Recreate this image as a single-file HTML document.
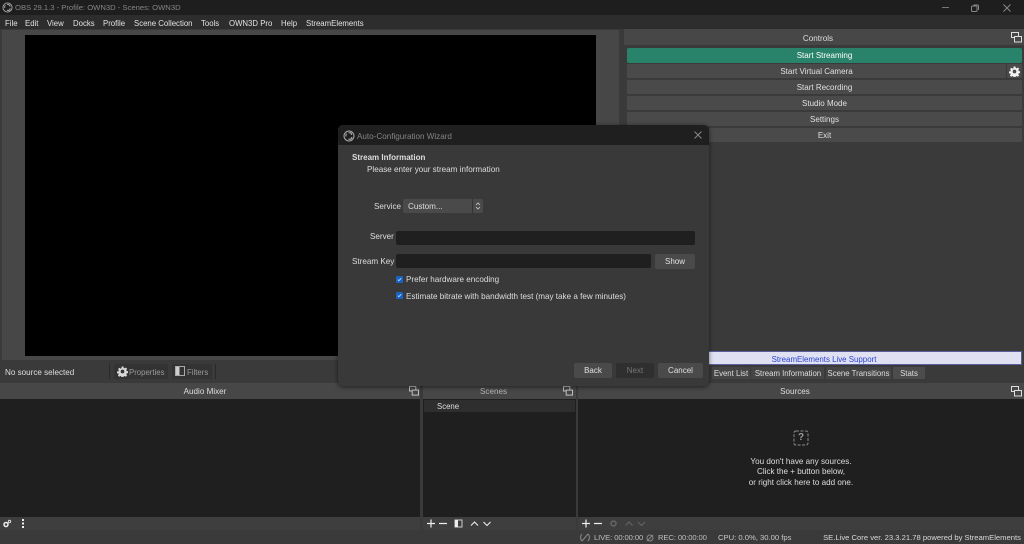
<!DOCTYPE html>
<html><head><meta charset="utf-8"><style>
html,body{margin:0;padding:0;width:1024px;height:544px;overflow:hidden;background:#3a3a3a}
body{position:relative;font-family:"Liberation Sans",sans-serif;font-size:8.1px;color:#dedede}
.a{position:absolute}
.t{position:absolute;white-space:nowrap;line-height:14px}
.c{text-align:center}
.m{font-size:7.8px;top:18px;color:#e2e2e2;line-height:12px}
.s{font-size:7.65px;top:532px;line-height:12px}
.b{position:absolute;background:#4a4a4a;border-radius:1px;text-align:center;line-height:16px;color:#e0e0e0;font-size:8px}
</style></head><body>
<!-- title bar -->
<div class="a" style="left:0;top:0;width:1024px;height:15px;background:#1e1e1e"></div>
<svg class="a" style="left:2px;top:2px" width="11" height="11" viewBox="0 0 13 13" fill="none" stroke="#aaa"><circle cx="6.500" cy="6.500" r="5.400" stroke-width="1.100"/><path d="M6 3.200a2.200 2.200 0 0 1 3.300 2.200M9.500 7.500a2.200 2.200 0 0 1-3.600 2M3.500 7a2.200 2.200 0 0 1 .6-3" stroke-width="1.200"/></svg>
<div class="t" style="left:15px;top:2px;color:#858585;font-size:7.65px;line-height:12px">OBS 29.1.3 - Profile: OWN3D - Scenes: OWN3D</div>
<div class="a" style="left:942px;top:7px;width:7px;height:1px;background:#777"></div>
<svg class="a" style="left:971px;top:4px" width="8" height="8" viewBox="0 0 8 8" fill="none" stroke="#888"><rect x=".5" y="2" width="5.500" height="5.500" rx="1"/><path d="M2.500 1h4a1 1 0 0 1 1 1v4"/></svg>
<svg class="a" style="left:1003px;top:4px" width="8" height="8" viewBox="0 0 8 8" stroke="#888"><path d="M.5.500l7 7M7.500.500l-7 7"/></svg>
<!-- menu -->
<div class="a" style="left:0;top:15px;width:1024px;height:14px;background:#2d2d2d"></div>
<div class="t m" style="left:5px">File</div>
<div class="t m" style="left:25px">Edit</div>
<div class="t m" style="left:47px">View</div>
<div class="t m" style="left:73px">Docks</div>
<div class="t m" style="left:103px">Profile</div>
<div class="t m" style="left:134px">Scene Collection</div>
<div class="t m" style="left:201px">Tools</div>
<div class="t m" style="left:229px">OWN3D Pro</div>
<div class="t m" style="left:281px">Help</div>
<div class="t m" style="left:306px">StreamElements</div>
<!-- preview area -->
<div class="a" style="left:2px;top:30px;width:617px;height:330px;background:#474747"></div>
<div class="a" style="left:25px;top:35px;width:571px;height:321px;background:#000"></div>
<!-- controls -->
<div class="a" style="left:624px;top:29px;width:400px;height:16px;background:#474747"></div>
<div class="t c" style="left:624px;top:32px;width:388px">Controls</div>
<svg class="a" style="left:1011px;top:32px" width="11" height="11" viewBox="0 0 11 11" fill="#474747" stroke="#ddd"><rect x=".5" y=".5" width="7" height="5"/><rect x="3.500" y="4.500" width="7" height="5.500"/></svg>
<div class="b" style="left:627px;top:48px;width:395px;height:15px;background:#29836a;color:#fff;border-radius:2px;line-height:15px">Start Streaming</div>
<div class="b" style="left:627px;top:64px;width:379px;height:14px">Start Virtual Camera</div>
<div class="b" style="left:1007px;top:64px;width:15px;height:14px"></div>
<svg class="a" style="left:1009px;top:66px" width="11" height="11" viewBox="0 0 24 24"><path fill="#f2f2f2" fill-rule="evenodd" d="M10 1h4l.6 3.200 2 .9L19.300 3.300l2.800 2.800-1.800 2.700.9 2 3.200.6v4l-3.200.6-.9 2 1.800 2.700-2.800 2.800-2.700-1.800-2 .9-.6 3.200h-4l-.6-3.200-2-.9-2.700 1.800-2.800-2.800 1.800-2.700-.9-2L0 16v-4l3.200-.6.900-2-1.800-2.700 2.800-2.800 2.700 1.800 2-.9zM12 8a4 4 0 1 0 0 8 4 4 0 0 0 0-8z"/></svg>
<div class="b" style="left:627px;top:80px;width:395px;height:14px">Start Recording</div>
<div class="b" style="left:627px;top:96px;width:395px;height:14px">Studio Mode</div>
<div class="b" style="left:627px;top:112px;width:395px;height:14px">Settings</div>
<div class="b" style="left:627px;top:128px;width:395px;height:14px">Exit</div>
<!-- no source -->
<div class="t" style="left:5px;top:366px">No source selected</div>
<div class="a" style="left:109px;top:364px;width:1px;height:15px;background:#2a2a2a"></div>
<div class="a" style="left:114px;top:364px;width:54px;height:15px;background:#333;border-radius:2px"></div>
<svg class="a" style="left:117px;top:366px" width="11" height="11" viewBox="0 0 24 24"><path fill="#d8d8d8" fill-rule="evenodd" d="M10 1h4l.6 3.200 2 .9L19.300 3.300l2.800 2.800-1.800 2.700.9 2 3.200.6v4l-3.200.6-.9 2 1.800 2.700-2.800 2.800-2.700-1.800-2 .9-.6 3.200h-4l-.6-3.200-2-.9-2.700 1.800-2.800-2.800 1.800-2.700-.9-2L0 16v-4l3.200-.6.900-2-1.800-2.700 2.800-2.800 2.700 1.800 2-.9zM12 8a4 4 0 1 0 0 8 4 4 0 0 0 0-8z"/></svg>
<div class="t" style="left:129px;top:366px;color:#9a9a9a;font-size:7.8px">Properties</div>
<div class="a" style="left:172px;top:364px;width:40px;height:15px;background:#333;border-radius:2px"></div>
<svg class="a" style="left:175px;top:366px" width="10" height="10" viewBox="0 0 10 10"><rect x=".5" y=".5" width="9" height="9" fill="none" stroke="#aaa"/><rect x="1" y="1" width="3.500" height="8" fill="#ccc"/></svg>
<div class="t" style="left:187px;top:366px;color:#9a9a9a;font-size:7.8px">Filters</div>
<div class="a" style="left:215px;top:364px;width:1px;height:15px;background:#2a2a2a"></div>
<!-- support / tabs -->
<div class="a" style="left:700px;top:351px;width:322px;height:14px;background:#dfe1f3;border:1px solid #5a5f9c;box-sizing:border-box"></div>
<div class="t c" style="left:700px;top:353px;width:248px;color:#2a3fd0;font-size:7.9px">StreamElements Live Support</div>
<div class="a" style="left:712px;top:367px;width:38px;height:12px;background:#454545"></div>
<div class="a" style="left:751px;top:367px;width:73px;height:12px;background:#454545"></div>
<div class="a" style="left:826px;top:367px;width:65px;height:12px;background:#454545"></div>
<div class="a" style="left:893px;top:367px;width:32px;height:12px;background:#4c4c4c"></div>
<div class="t c" style="left:712px;top:367px;width:38px;font-size:7.8px">Event List</div>
<div class="t c" style="left:751px;top:367px;width:74px;font-size:7.8px">Stream Information</div>
<div class="t c" style="left:826px;top:367px;width:65px;font-size:7.8px">Scene Transitions</div>
<div class="t c" style="left:893px;top:367px;width:32px;font-size:7.8px">Stats</div>
<!-- docks -->
<div class="a" style="left:0;top:383px;width:420px;height:16px;background:#474747"></div>
<div class="a" style="left:423px;top:383px;width:153px;height:16px;background:#474747"></div>
<div class="a" style="left:578px;top:383px;width:446px;height:16px;background:#474747"></div>
<div class="a" style="left:0;top:399px;width:420px;height:118px;background:#1f1f1f"></div>
<div class="a" style="left:423px;top:399px;width:153px;height:118px;background:#1f1f1f"></div>
<div class="a" style="left:578px;top:399px;width:446px;height:118px;background:#1f1f1f"></div>
<div class="a" style="left:424px;top:400px;width:151px;height:12px;background:#2e2e2e"></div>
<div class="t" style="left:437px;top:400px;font-size:7.8px">Scene</div>
<div class="t c" style="left:0;top:385px;width:410px">Audio Mixer</div>
<div class="t c" style="left:423px;top:385px;width:141px;color:#b5b5b5">Scenes</div>
<div class="t c" style="left:578px;top:385px;width:434px">Sources</div>
<svg class="a" style="left:409px;top:386px" width="10" height="10" viewBox="0 0 11 11" fill="#474747" stroke="#ccc"><rect x=".5" y=".5" width="7" height="5"/><rect x="3.500" y="4.500" width="7" height="5.500"/></svg>
<svg class="a" style="left:563px;top:386px" width="10" height="10" viewBox="0 0 11 11" fill="#474747" stroke="#ccc"><rect x=".5" y=".5" width="7" height="5"/><rect x="3.500" y="4.500" width="7" height="5.500"/></svg>
<svg class="a" style="left:1011px;top:386px" width="11" height="11" viewBox="0 0 11 11" fill="#474747" stroke="#ddd"><rect x=".5" y=".5" width="7" height="5"/><rect x="3.500" y="4.500" width="7" height="5.500"/></svg>
<!-- dock toolbars -->
<div class="a" style="left:0;top:517px;width:420px;height:13px;background:#3e3e3e"></div>
<div class="a" style="left:423px;top:517px;width:153px;height:13px;background:#3e3e3e"></div>
<div class="a" style="left:578px;top:517px;width:446px;height:13px;background:#3e3e3e"></div>
<svg class="a" style="left:0;top:517px" width="28" height="13" viewBox="0 0 28 13"><circle cx="6" cy="7.500" r="2" fill="none" stroke="#eee" stroke-width="1.500"/><circle cx="9.500" cy="4.500" r="1.200" fill="none" stroke="#ddd"/><rect x="22" y="2" width="2" height="2" fill="#eee"/><rect x="22" y="5.500" width="2" height="2" fill="#eee"/><rect x="22" y="9" width="2" height="2" fill="#eee"/></svg>
<svg class="a" style="left:423px;top:517px" width="75" height="13" viewBox="0 0 75 13" fill="none" stroke="#eee"><path d="M4 6.500h8M8 2.500v8M16 6.500h8" stroke-width="1.200"/><rect x="32" y="3" width="7" height="7" stroke="#ccc"/><rect x="32" y="3" width="3" height="7" fill="#eee" stroke="none"/><path d="M48 8.500l3.500-3.500 3.500 3.500M60.500 5l3.500 3.500L67.500 5" stroke-width="1.100"/></svg>
<svg class="a" style="left:578px;top:517px" width="75" height="13" viewBox="0 0 75 13" fill="none" stroke="#eee"><path d="M4 6.500h8M8 2.500v8M16 6.500h8" stroke-width="1.200"/><circle cx="35.500" cy="6.500" r="2.500" stroke="#666" stroke-width="1.500"/><path d="M47.500 8.500l3.500-3.500 3.500 3.500M60 5l3.500 3.500L67 5" stroke="#666"/></svg>
<!-- sources placeholder -->
<svg class="a" style="left:793px;top:430px" width="16" height="16" viewBox="0 0 16 16" fill="none" stroke="#8a8a8a"><rect x="1" y="1" width="14" height="14" rx="2" stroke-dasharray="3 1.500"/></svg>
<div class="t c" style="left:793px;top:431px;width:16px;color:#9a9a9a;font-weight:bold;font-size:10px">?</div>
<div class="t c" style="left:686px;top:455px;width:230px">You don't have any sources.</div>
<div class="t c" style="left:686px;top:465px;width:230px">Click the + button below,</div>
<div class="t c" style="left:686px;top:476px;width:230px">or right click here to add one.</div>
<!-- status bar -->
<svg class="a" style="left:580px;top:533px" width="10" height="9" viewBox="0 0 10 9" fill="none" stroke="#888"><path d="M2 1a5 5 0 0 0 0 7M8 1a5 5 0 0 1 0 7M2 8l6-7"/></svg>
<div class="t s" style="left:594px;color:#bdbdbd;letter-spacing:-.1px">LIVE: 00:00:00</div>
<svg class="a" style="left:646px;top:534px" width="8" height="8" viewBox="0 0 8 8" fill="none" stroke="#888"><circle cx="4" cy="4" r="3"/><path d="M1 7l6-6"/></svg>
<div class="t s" style="left:658px;color:#bdbdbd;letter-spacing:-.1px">REC: 00:00:00</div>
<div class="t s" style="left:718px;color:#c8c8c8">CPU: 0.0%, 30.00 fps</div>
<div class="t s" style="right:3px;color:#d8d8d8">SE.Live Core ver. 23.3.21.78 powered by StreamElements</div>
<!-- dialog -->
<div class="a" style="left:338px;top:125px;width:371px;height:261px;background:#393939;border-radius:5px;box-shadow:0 1px 5px rgba(0,0,0,.55);overflow:hidden">
<div class="a" style="left:0;top:0;width:371px;height:20px;background:#1f1f1f"></div>
</div>
<svg class="a" style="left:343px;top:130px" width="12" height="12" viewBox="0 0 13 13" fill="none" stroke="#aaa"><circle cx="6.500" cy="6.500" r="5.400" stroke-width="1.100"/><path d="M6 3.200a2.200 2.200 0 0 1 3.300 2.200M9.500 7.500a2.200 2.200 0 0 1-3.600 2M3.500 7a2.200 2.200 0 0 1 .6-3" stroke-width="1.200"/></svg>
<div class="t" style="left:357px;top:130px;color:#858585">Auto-Configuration Wizard</div>
<svg class="a" style="left:694px;top:131px" width="8" height="8" viewBox="0 0 8 8" stroke="#888"><path d="M.5.500l7 7M7.500.500l-7 7"/></svg>
<div class="t" style="left:352px;top:151px;font-weight:bold;font-size:8px">Stream Information</div>
<div class="t" style="left:367px;top:163px">Please enter your stream information</div>
<div class="t" style="left:374px;top:200px">Service</div>
<div class="a" style="left:403px;top:199px;width:69px;height:14px;background:#4a4a4a;border-radius:2px 0 0 2px"></div>
<div class="a" style="left:472px;top:199px;width:11px;height:14px;background:#4a4a4a;border-radius:0 2px 2px 0;border-left:1px solid #333;box-sizing:border-box"></div>
<svg class="a" style="left:475px;top:202px" width="6" height="8" viewBox="0 0 6 8" fill="none" stroke="#ccc" stroke-width=".8"><path d="M1 3l2-2 2 2M1 5l2 2 2-2"/></svg>
<div class="t" style="left:408px;top:200px">Custom...</div>
<div class="t" style="left:370px;top:230px">Server</div>
<div class="a" style="left:396px;top:231px;width:299px;height:14px;background:#1f1f1f;border-radius:2px"></div>
<div class="t" style="left:352px;top:255px">Stream Key</div>
<div class="a" style="left:396px;top:254px;width:255px;height:14px;background:#1f1f1f;border-radius:2px"></div>
<div class="b" style="left:655px;top:254px;width:40px;height:15px;line-height:15px;border-radius:2px">Show</div>
<div class="a" style="left:396px;top:276px;width:7px;height:7px;background:#1a62c4;border-radius:1px"></div>
<svg class="a" style="left:396px;top:276px" width="7" height="7" viewBox="0 0 7 7" fill="none" stroke="#cfe0f8" stroke-width=".8"><path d="M1.800 3.700l1 1 2.400-2.400"/></svg>
<div class="t" style="left:406px;top:273px">Prefer hardware encoding</div>
<div class="a" style="left:396px;top:292px;width:7px;height:7px;background:#1a62c4;border-radius:1px"></div>
<svg class="a" style="left:396px;top:292px" width="7" height="7" viewBox="0 0 7 7" fill="none" stroke="#cfe0f8" stroke-width=".8"><path d="M1.800 3.700l1 1 2.400-2.400"/></svg>
<div class="t" style="left:406px;top:290px">Estimate bitrate with bandwidth test (may take a few minutes)</div>
<div class="b" style="left:574px;top:363px;width:38px;height:15px;line-height:15px;border-radius:2px">Back</div>
<div class="b" style="left:616px;top:363px;width:38px;height:15px;line-height:15px;background:#2f2f2f;color:#777;border-radius:2px">Next</div>
<div class="b" style="left:658px;top:363px;width:45px;height:15px;line-height:15px;border-radius:2px">Cancel</div>
</body></html>
